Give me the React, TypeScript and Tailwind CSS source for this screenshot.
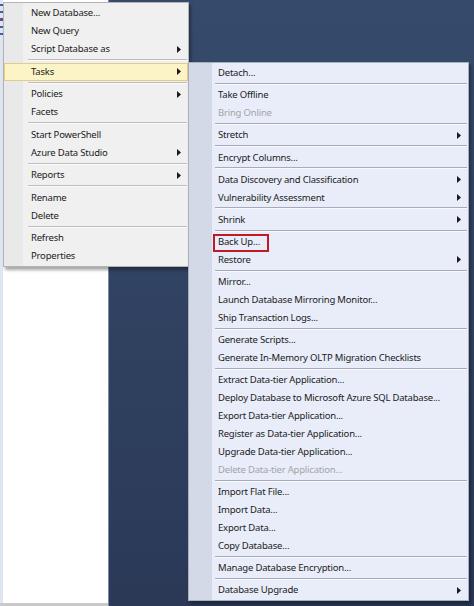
type Entry = { label: string; arrow?: boolean; disabled?: boolean; hot?: boolean; boxed?: boolean } | 'sep'

const dbMenu: Entry[] = [
  { label: 'New Database...' },
  { label: 'New Query' },
  { label: 'Script Database as', arrow: true },
  'sep',
  { label: 'Tasks', arrow: true, hot: true },
  'sep',
  { label: 'Policies', arrow: true },
  { label: 'Facets' },
  'sep',
  { label: 'Start PowerShell' },
  { label: 'Azure Data Studio', arrow: true },
  'sep',
  { label: 'Reports', arrow: true },
  'sep',
  { label: 'Rename' },
  { label: 'Delete' },
  'sep',
  { label: 'Refresh' },
  { label: 'Properties' },
]

const tasksMenu: Entry[] = [
  { label: 'Detach...' },
  'sep',
  { label: 'Take Offline' },
  { label: 'Bring Online', disabled: true },
  'sep',
  { label: 'Stretch', arrow: true },
  'sep',
  { label: 'Encrypt Columns...' },
  'sep',
  { label: 'Data Discovery and Classification', arrow: true },
  { label: 'Vulnerability Assessment', arrow: true },
  'sep',
  { label: 'Shrink', arrow: true },
  'sep',
  { label: 'Back Up...', boxed: true },
  { label: 'Restore', arrow: true },
  'sep',
  { label: 'Mirror...' },
  { label: 'Launch Database Mirroring Monitor...' },
  { label: 'Ship Transaction Logs...' },
  'sep',
  { label: 'Generate Scripts...' },
  { label: 'Generate In-Memory OLTP Migration Checklists' },
  'sep',
  { label: 'Extract Data-tier Application...' },
  { label: 'Deploy Database to Microsoft Azure SQL Database...' },
  { label: 'Export Data-tier Application...' },
  { label: 'Register as Data-tier Application...' },
  { label: 'Upgrade Data-tier Application...' },
  { label: 'Delete Data-tier Application...', disabled: true },
  'sep',
  { label: 'Import Flat File...' },
  { label: 'Import Data...' },
  { label: 'Export Data...' },
  { label: 'Copy Database...' },
  'sep',
  { label: 'Manage Database Encryption...' },
  'sep',
  { label: 'Database Upgrade', arrow: true },
]

function Arrow() {
  return (
    <svg width="4" height="7" viewBox="0 0 4 7" className="shrink-0">
      <path d="M0 0 L4 3.5 L0 7 Z" fill="#1a1a1a" />
    </svg>
  )
}

function Menu({ items, variant }: { items: Entry[]; variant: 'gray' | 'blue' }) {
  const blue = variant === 'blue'
  return (
    <div
      className={`relative flex flex-col py-px border ${
        blue ? 'bg-[#e9edf9] border-[#a9afbf]' : 'bg-[#f0f0f0] border-[#b4b4b4]'
      } shadow-[2px_3px_3px_rgba(0,0,0,0.35)]`}
    >
      <div
        className={`absolute left-0 top-0 bottom-0 ${blue ? 'w-[23px] bg-[#d4d9e7]' : 'w-[19px] bg-[#e9e9e9]'}`}
      />
      {items.map((it, i) =>
        it === 'sep' ? (
          <div
            key={i}
            className={`relative flex flex-col justify-center ${
              blue ? 'h-[4.1px] ml-[26px] mr-[1px]' : 'h-[4.5px] ml-[24px] mr-[1px]'
            }`}
          >
            <div className={`h-px ${blue ? 'bg-[#a6abb9]' : 'bg-[#bdbdbd]'}`} />
            <div className="h-px bg-white/70" />
          </div>
        ) : (
          <div
            key={i}
            className={`relative flex items-center h-[18px] pr-[7px] ${blue ? 'pl-[29px]' : 'pl-[27px]'} ${
              it.hot ? 'bg-[#fcf3c6] outline outline-1 outline-[#e3cc88] -outline-offset-1' : ''
            }`}
          >
            <span className={`flex-1 whitespace-nowrap ${it.disabled ? 'text-[#a3a3a7]' : 'text-[#1b1b1b]'}`}>
              {it.label}
            </span>
            {it.arrow && <Arrow />}
            {it.boxed && (
              <div className="absolute left-[24px] top-[1px] w-[56px] h-[18px] border-2 border-[#c21a24]" />
            )}
          </div>
        )
      )}
    </div>
  )
}

export default function App() {
  return (
    <div
      className="relative w-[474px] h-[606px] overflow-hidden flex text-[9.5px] tracking-[-0.2px] leading-none"
      style={{ fontFamily: '"Noto Sans", "Open Sans", sans-serif' }}
    >
      <div className="w-[109px] h-full flex flex-col bg-white border-r border-[#7e8aa0]">
        <div className="flex-1 flex">
          <div className="w-[3px] flex flex-col gap-[5px] pt-[4px] bg-[#dfe6f2]">
            <div className="h-[2px] bg-[#3f5ea8]" />
            <div className="h-[2px] bg-[#3f5ea8]" />
            <div className="h-[3px] bg-[#6a4c90]" />
            <div className="h-[2px] bg-[#3f5ea8]" />
            <div className="h-[2px] bg-[#3f5ea8]" />
          </div>
          <div className="flex-1" />
        </div>
        <div className="h-[3px] bg-[#c9c9c9]" />
      </div>
      <div className="flex-1 h-full bg-linear-to-b from-[#364b6c] to-[#2b3957]" />

      <div className="absolute left-[3px] top-[2px] w-[186px]">
        <Menu items={dbMenu} variant="gray" />
      </div>
      <div className="absolute left-[188px] top-[62px] w-[281px]">
        <Menu items={tasksMenu} variant="blue" />
      </div>
    </div>
  )
}
